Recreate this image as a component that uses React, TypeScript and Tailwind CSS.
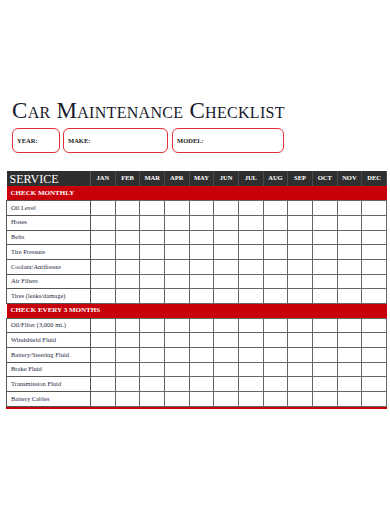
const months = ["JAN", "FEB", "MAR", "APR", "MAY", "JUN", "JUL", "AUG", "SEP", "OCT", "NOV", "DEC"];

const monthly = ["Oil Level", "Hoses", "Belts", "Tire Pressure", "Coolant/Antifreeze", "Air Filters", "Tires (leaks/damage)"];
const quarterly = ["Oil/Filter (3,000 mi.)", "Windshield Fluid", "Battery/Steering Fluid", "Brake Fluid", "Transmission Fluid", "Battery Cables"];

const serif = { fontFamily: '"Liberation Serif", "DejaVu Serif", serif' };

function SectionRow({ label }: { label: string }) {
  return (
    <tr className="h-[14.7px] bg-[#c80009]">
      <td colSpan={13} className="px-[4px] text-[7px] font-bold leading-none text-white">
        {label}
      </td>
    </tr>
  );
}

function ItemRow({ label }: { label: string }) {
  return (
    <tr className="h-[14.7px]">
      <td className="border border-[#555] px-[4px] text-[6.5px] leading-none text-[#1f2a44]">{label}</td>
      {months.map((m) => (
        <td key={m} className="border border-[#666]" />
      ))}
    </tr>
  );
}

export default function App() {
  return (
    <div className="h-[505px] w-[390px] bg-white" style={serif}>
      <div className="pl-[12px] pt-[98px]">
        <h1 className="text-[23px] leading-[26px] tracking-[0.3px] text-[#161a2b]" style={{ fontVariant: "small-caps" }}>
          Car Maintenance Checklist
        </h1>
        <div className="mt-[4px] flex gap-[3px]">
          <div className="flex h-[25px] w-[48px] items-center rounded-[6px] border border-[#e0303a] pl-[4px] text-[6.5px] font-bold text-[#222]">
            YEAR:
          </div>
          <div className="flex h-[25px] w-[105px] items-center rounded-[6px] border border-[#e0303a] pl-[4px] text-[6.5px] font-bold text-[#222]">
            MAKE:
          </div>
          <div className="ml-[1px] flex h-[25px] w-[112px] items-center rounded-[6px] border border-[#e0303a] pl-[4px] text-[6.5px] font-bold text-[#222]">
            MODEL:
          </div>
        </div>
      </div>
      <div className="ml-[6px] mt-[18px] w-[381px] border-b-2 border-[#c80009]">
        <table className="w-full table-fixed border-collapse">
          <colgroup>
            <col className="w-[84px]" />
            {months.map((m) => (
              <col key={m} />
            ))}
          </colgroup>
          <thead>
            <tr className="h-[15px] bg-[#2f2f2f] text-white">
              <th className="border-r border-[#555] px-[3px] text-left text-[12px] font-normal leading-none">SERVICE</th>
              {months.map((m) => (
                <th key={m} className="border-r border-[#4a4a4a] text-center text-[6.5px] font-bold leading-none">
                  {m}
                </th>
              ))}
            </tr>
          </thead>
          <tbody>
            <SectionRow label="CHECK MONTHLY" />
            {monthly.map((r) => (
              <ItemRow key={r} label={r} />
            ))}
            <SectionRow label="CHECK EVERY 3 MONTHS" />
            {quarterly.map((r) => (
              <ItemRow key={r} label={r} />
            ))}
          </tbody>
        </table>
      </div>
    </div>
  );
}
